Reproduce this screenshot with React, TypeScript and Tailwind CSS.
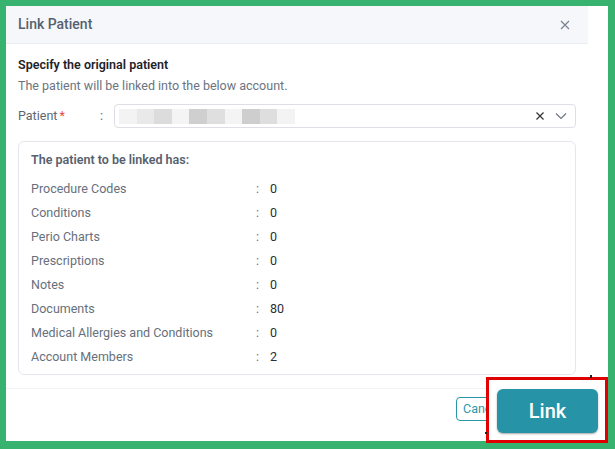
import React from "react";

const rows: [string, string][] = [
  ["Procedure Codes", "0"],
  ["Conditions", "0"],
  ["Perio Charts", "0"],
  ["Prescriptions", "0"],
  ["Notes", "0"],
  ["Documents", "80"],
  ["Medical Allergies and Conditions", "0"],
  ["Account Members", "2"],
];

// blurred patient name blocks
const blur = ["#f3f3f3", "#e9e9e9", "#dcdcdc", "#f4f4f4", "#cfcfcf", "#dfdfdf", "#f3f4f3", "#cecece", "#dedede", "#f3f3f3"];

export default function App() {
  return (
    <div className="w-[615px] h-[449px] bg-[#37b26f] pt-[6px] pl-[6px] pr-[7px] pb-[8px] font-['Roboto',sans-serif]">
      <div className="relative h-full bg-white flex flex-col">
        {/* Header */}
        <div className="w-[582px] h-[38px] shrink-0 bg-[#f5f7fa] border-b border-[#e9ecf1] flex items-center justify-between pl-3 pr-[18px]">
          <span className="text-[14px] font-medium text-[#56616f]">Link Patient</span>
          <svg width="10" height="10" viewBox="0 0 10 10" className="text-[#7a8491]">
            <path d="M1 1L9 9M9 1L1 9" stroke="currentColor" strokeWidth="1.2" />
          </svg>
        </div>

        {/* Body */}
        <div className="flex-1 pl-3 pr-8 pt-[13px]">
          <div className="text-[12.5px] leading-4 font-semibold text-[#1f2329]">Specify the original patient</div>
          <div className="mt-[5px] text-[12.5px] leading-4 text-[#6b7480]">The patient will be linked into the below account.</div>

          <div className="mt-[10px] h-6 flex items-center">
            <div className="w-[82px] text-[12.5px] text-[#5c6672]">
              Patient<span className="text-[#e5483f] ml-[2px]">*</span>
            </div>
            <div className="w-[14px] text-[12.5px] text-[#5c6672]">:</div>
            <div className="flex-1 h-6 border border-[#dcdfe6] rounded-[4px] flex items-center pl-1 pr-[8px]">
              <div className="flex h-[15px]">
                {blur.map((c, i) => (
                  <div key={i} className="w-[17.6px] h-full" style={{ backgroundColor: c }} />
                ))}
              </div>
              <div className="flex-1" />
              <svg width="10" height="10" viewBox="0 0 10 10" className="text-[#333]">
                <path d="M1.5 1.5L8.5 8.5M8.5 1.5L1.5 8.5" stroke="currentColor" strokeWidth="1.2" />
              </svg>
              <svg width="12" height="8" viewBox="0 0 12 8" className="ml-[10px] text-[#6f7782]">
                <path d="M1 1.5L6 6.5L11 1.5" stroke="currentColor" strokeWidth="1.2" fill="none" />
              </svg>
            </div>
          </div>

          {/* Card */}
          <div className="mt-[13px] h-[234px] border border-[#e4e7ed] rounded-[6px] pl-[12px] pt-[10px]">
            <div className="text-[12.5px] leading-4 font-semibold text-[#56616e]">The patient to be linked has:</div>
            <div className="mt-[9px]">
              {rows.map(([label, value]) => (
                <div key={label} className="h-6 flex items-center text-[12.5px]">
                  <span className="w-[225px] text-[#66707c]">{label}</span>
                  <span className="w-[14px] text-[#66707c]">:</span>
                  <span className="text-[#2b2f35]">{value}</span>
                </div>
              ))}
            </div>
          </div>
        </div>

        {/* Footer */}
        <div className="h-[53px] shrink-0 border-t border-[#f1f2f5] flex justify-end items-start pt-2 pr-[88px]">
          <button className="w-[64px] h-6 border border-[#2a97a9] rounded-[4px] text-[12.5px] text-[#2a97a9] text-left pl-[6px]">
            Cancel
          </button>
        </div>

        {/* Annotation overlay */}
        <div className="absolute left-[480px] top-[371px] w-[122px] h-[66px] border-[3px] border-[#e10000] bg-white" />
        <button className="absolute left-[491px] top-[383px] w-[101px] h-[44px] rounded-[6px] bg-[#2693a6] shadow-[0_1px_2px_rgba(0,0,0,0.35)] text-white text-[20px] font-medium">
          Link
        </button>
        <div className="absolute left-[584px] top-[369px] w-[2px] h-[3px] bg-[#222]" />
        <div className="absolute left-[479px] top-[426px] w-[2px] h-[2px] bg-[#222]" />
      </div>
    </div>
  );
}
